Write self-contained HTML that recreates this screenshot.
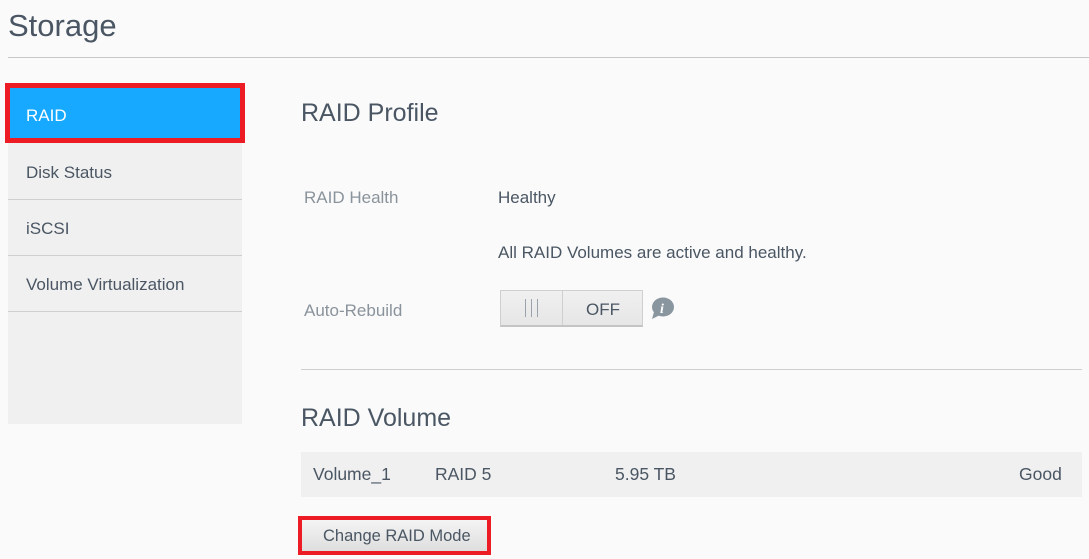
<!DOCTYPE html>
<html><head><style>
body{margin:0;width:1089px;height:559px;background:#fafafa;font-family:"Liberation Sans",sans-serif;color:#4a5663;position:relative;overflow:hidden}
.a{position:absolute}
</style></head><body>
<div class="a" style="left:8px;top:8px;font-size:31px;color:#4a5663">Storage</div>
<div class="a" style="left:8px;top:57px;width:1081px;height:1px;background:#c8c8c8"></div>
<div class="a" style="left:8px;top:86px;width:234px;height:338px;background:#f0f0f0"></div>
<div class="a" style="left:5px;top:83px;width:230px;height:50px;background:#16a9ff;border:5px solid #ed1c24"></div>
<div class="a" style="left:26px;top:106px;font-size:17px;color:#fff">RAID</div>
<div class="a" style="left:26px;top:163px;font-size:17px">Disk Status</div>
<div class="a" style="left:8px;top:199px;width:234px;height:1px;background:#cfcfcf"></div>
<div class="a" style="left:26px;top:219px;font-size:17px">iSCSI</div>
<div class="a" style="left:8px;top:255px;width:234px;height:1px;background:#cfcfcf"></div>
<div class="a" style="left:26px;top:275px;font-size:17px">Volume Virtualization</div>
<div class="a" style="left:8px;top:311px;width:234px;height:1px;background:#cfcfcf"></div>
<div class="a" style="left:301px;top:99px;font-size:25px">RAID Profile</div>
<div class="a" style="left:304px;top:188px;font-size:17px;color:#8a939c">RAID Health</div>
<div class="a" style="left:498px;top:188px;font-size:17px">Healthy</div>
<div class="a" style="left:498px;top:243px;font-size:17px">All RAID Volumes are active and healthy.</div>
<div class="a" style="left:304px;top:301px;font-size:17px;color:#8a939c">Auto-Rebuild</div>
<div class="a" style="left:500px;top:290px;width:143px;height:37px;border:1px solid #cfcfcf;border-bottom:2px solid #c4c4c4;background:linear-gradient(#f0f0f0,#e6e6e6);box-sizing:border-box"></div>
<div class="a" style="left:562px;top:291px;width:1px;height:34px;background:#cfcfcf"></div>
<div class="a" style="left:525px;top:299px;width:1px;height:18px;background:#9aa3ab;box-shadow:6px 0 #9aa3ab,12px 0 #9aa3ab"></div>
<div class="a" style="left:586px;top:300px;font-size:17px">OFF</div>
<svg class="a" style="left:650px;top:297px" width="26" height="24"><ellipse cx="13" cy="10" rx="11" ry="9.5" fill="#8a969f"/><path d="M4 15 L2 22 L10 18Z" fill="#8a969f"/><text x="10" y="16" font-size="14" font-weight="bold" font-style="italic" fill="#fff" font-family="Liberation Serif">i</text></svg>
<div class="a" style="left:301px;top:369px;width:781px;height:1px;background:#cfcfcf"></div>
<div class="a" style="left:301px;top:404px;font-size:25px">RAID Volume</div>
<div class="a" style="left:301px;top:452px;width:781px;height:45px;background:#f0f0f0"></div>
<div class="a" style="left:313px;top:464px;font-size:17.5px">Volume_1</div>
<div class="a" style="left:435px;top:464px;font-size:17.5px">RAID 5</div>
<div class="a" style="left:615px;top:464px;font-size:17.5px">5.95 TB</div>
<div class="a" style="left:1019px;top:464px;font-size:17.5px">Good</div>
<div class="a" style="left:298px;top:516px;width:185px;height:31px;border:4px solid #ed1c24;background:linear-gradient(#f4f4f4,#dedede)"></div>
<div class="a" style="left:323px;top:527px;font-size:16.5px">Change RAID Mode</div>
</body></html>
